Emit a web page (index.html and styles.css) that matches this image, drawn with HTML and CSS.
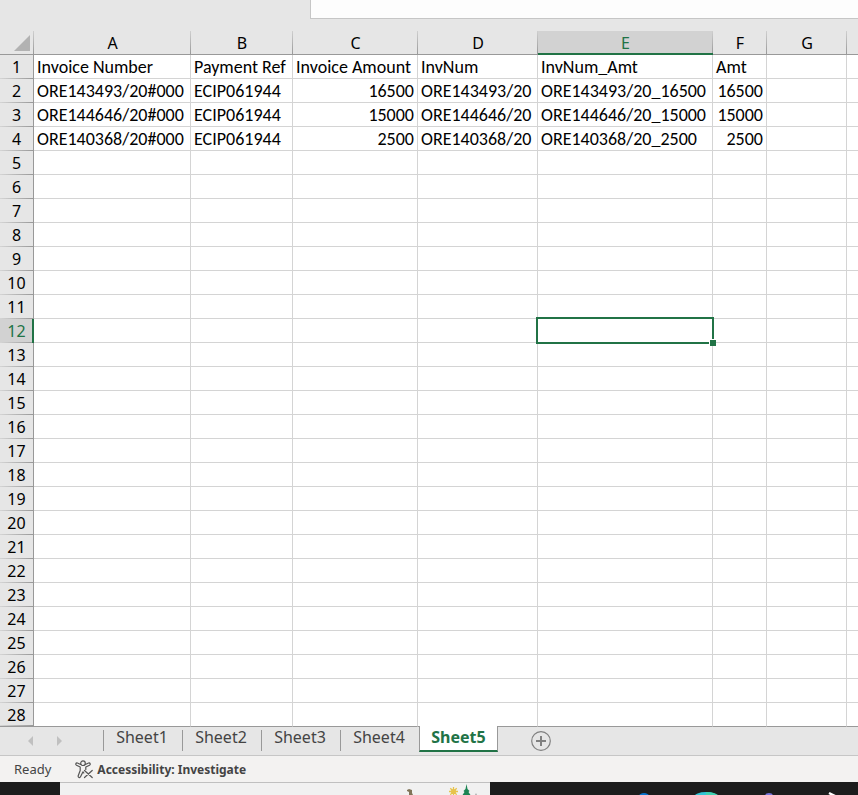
FILE: index.html
```html
<!DOCTYPE html>
<html lang="en">
<head>
<meta charset="utf-8">
<title>Workbook</title>
<link rel="stylesheet" href="styles.css">
</head>
<body>
<header class="formula-area"><div class="formula-bar"></div></header>
<main>
<table class="grid">
<colgroup><col class="c-row"><col class="c-a"><col class="c-b"><col class="c-c"><col class="c-d"><col class="c-e"><col class="c-f"><col class="c-g"><col></colgroup>
<thead>
<tr><th class="corner"><svg width="16" height="16" viewBox="0 0 16 16" aria-hidden="true"><path d="M16 0V16H0Z" fill="#b2b2b2"/></svg></th><th>A</th><th>B</th><th>C</th><th>D</th><th class="current">E</th><th>F</th><th>G</th><th></th></tr>
</thead>
<tbody>
<tr><th>1</th><td>Invoice Number</td><td>Payment Ref</td><td>Invoice Amount</td><td>InvNum</td><td>InvNum_Amt</td><td>Amt</td><td></td><td></td></tr>
<tr><th>2</th><td>ORE143493/20#000</td><td>ECIP061944</td><td class="num">16500</td><td>ORE143493/20</td><td>ORE143493/20_16500</td><td class="num">16500</td><td></td><td></td></tr>
<tr><th>3</th><td>ORE144646/20#000</td><td>ECIP061944</td><td class="num">15000</td><td>ORE144646/20</td><td>ORE144646/20_15000</td><td class="num">15000</td><td></td><td></td></tr>
<tr><th>4</th><td>ORE140368/20#000</td><td>ECIP061944</td><td class="num">2500</td><td>ORE140368/20</td><td>ORE140368/20_2500</td><td class="num">2500</td><td></td><td></td></tr>
<tr><th>5</th><td></td><td></td><td></td><td></td><td></td><td></td><td></td><td></td></tr>
<tr><th>6</th><td></td><td></td><td></td><td></td><td></td><td></td><td></td><td></td></tr>
<tr><th>7</th><td></td><td></td><td></td><td></td><td></td><td></td><td></td><td></td></tr>
<tr><th>8</th><td></td><td></td><td></td><td></td><td></td><td></td><td></td><td></td></tr>
<tr><th>9</th><td></td><td></td><td></td><td></td><td></td><td></td><td></td><td></td></tr>
<tr><th>10</th><td></td><td></td><td></td><td></td><td></td><td></td><td></td><td></td></tr>
<tr><th>11</th><td></td><td></td><td></td><td></td><td></td><td></td><td></td><td></td></tr>
<tr><th class="current">12</th><td></td><td></td><td></td><td></td><td class="selected"><div class="selection"></div></td><td></td><td></td><td></td></tr>
<tr><th>13</th><td></td><td></td><td></td><td></td><td></td><td></td><td></td><td></td></tr>
<tr><th>14</th><td></td><td></td><td></td><td></td><td></td><td></td><td></td><td></td></tr>
<tr><th>15</th><td></td><td></td><td></td><td></td><td></td><td></td><td></td><td></td></tr>
<tr><th>16</th><td></td><td></td><td></td><td></td><td></td><td></td><td></td><td></td></tr>
<tr><th>17</th><td></td><td></td><td></td><td></td><td></td><td></td><td></td><td></td></tr>
<tr><th>18</th><td></td><td></td><td></td><td></td><td></td><td></td><td></td><td></td></tr>
<tr><th>19</th><td></td><td></td><td></td><td></td><td></td><td></td><td></td><td></td></tr>
<tr><th>20</th><td></td><td></td><td></td><td></td><td></td><td></td><td></td><td></td></tr>
<tr><th>21</th><td></td><td></td><td></td><td></td><td></td><td></td><td></td><td></td></tr>
<tr><th>22</th><td></td><td></td><td></td><td></td><td></td><td></td><td></td><td></td></tr>
<tr><th>23</th><td></td><td></td><td></td><td></td><td></td><td></td><td></td><td></td></tr>
<tr><th>24</th><td></td><td></td><td></td><td></td><td></td><td></td><td></td><td></td></tr>
<tr><th>25</th><td></td><td></td><td></td><td></td><td></td><td></td><td></td><td></td></tr>
<tr><th>26</th><td></td><td></td><td></td><td></td><td></td><td></td><td></td><td></td></tr>
<tr><th>27</th><td></td><td></td><td></td><td></td><td></td><td></td><td></td><td></td></tr>
<tr><th>28</th><td></td><td></td><td></td><td></td><td></td><td></td><td></td><td></td></tr>
</tbody>
</table>
</main>
<nav class="tabs">
<div class="tab-nav">
<button type="button" aria-label="Previous sheet"><svg width="5" height="10" viewBox="0 0 5 10"><path d="M5 0V10L0 5Z" fill="#c0c0c0"/></svg></button>
<button type="button" aria-label="Next sheet"><svg width="5" height="10" viewBox="0 0 5 10"><path d="M0 0V10L5 5Z" fill="#c0c0c0"/></svg></button>
</div>
<button type="button" class="tab">Sheet1</button>
<button type="button" class="tab">Sheet2</button>
<button type="button" class="tab">Sheet3</button>
<button type="button" class="tab">Sheet4</button>
<button type="button" class="tab active">Sheet5</button>
<button type="button" class="add" aria-label="New sheet"><svg width="20" height="20" viewBox="0 0 20 20" fill="none" stroke="#808080"><circle cx="10" cy="10" r="9.3" stroke-width="1.2"/><path d="M5 10H15M10 5V15" stroke-width="2"/></svg></button>
</nav>
<footer>
<div class="status">
<span>Ready</span>
<button type="button" class="access"><svg width="19" height="19" viewBox="0 0 19 19" fill="none" stroke="#555" stroke-width="1.2" stroke-linecap="round" stroke-linejoin="round"><circle cx="8" cy="3.2" r="2.3"/><path d="M5.7 4.5 2.4 3C.8 2.6.2 4.5 1.5 5.2L5.2 7V10.5L3.2 15.8C2.8 17.5 4.8 18.2 5.5 16.8L8 11.8L8.8 13M10.3 4.5 13.6 3C15.2 2.6 15.8 4.5 14.5 5.2L10.8 7V9.5M9.5 10.5 17.2 17.5M17.2 10.5 9.5 17.5"/></svg>Accessibility: Investigate</button>
</div>
<div class="taskbar">
<div class="search"><svg width="82" height="12" viewBox="0 0 82 12" aria-hidden="true"><path d="M2 7l2-1 3 1 0 3 1 2H4V9L2 8Z" fill="#817458"/><path d="M48.500 4v9M44 8.500h9M45.300 5.300l6.400 6.400M51.700 5.300l-6.400 6.400" stroke="#e7c34b" stroke-width="1.300"/><circle cx="48.500" cy="8.500" r="2.500" fill="#e7c34b"/><path d="M61.500 1l1 5 2 2-1 1 2 3h-8l2-3-1-1 2-2Z" fill="#1c8453"/><path d="M71 10l1 2h-2Z" fill="#aaa"/></svg></div>
<svg class="apps" width="212" height="12" viewBox="0 0 212 12" aria-hidden="true"><ellipse cx="14" cy="13" rx="5" ry="3" fill="#0874ce"/><ellipse cx="76" cy="14" rx="12" ry="5" fill="#31c5d5"/><path d="M76 9q8 0 12 3H76Z" fill="#40d1b0"/><ellipse cx="139" cy="13" rx="4" ry="3" fill="#7775dc"/><path d="M199 10l8 4" stroke="#fff" stroke-width="2.4"/></svg>
</div>
</footer>
</body>
</html>
```
FILE: styles.css
```css
* { box-sizing: border-box; }
html { height: 100%; }
body {
  margin: 0;
  min-height: 100%;
  display: flex;
  flex-direction: column;
  overflow: hidden;
  background: #e6e6e6;
  color: #000;
  font-family: "Noto Sans", sans-serif;
}
button { border: 0; padding: 0; margin: 0; background: none; font: inherit; color: inherit; }
svg { display: block; }

.formula-area { padding-bottom: 12px; }
.formula-bar {
  height: 19px;
  margin-left: 310px;
  background: #fdfdfd;
  border-left: 1px solid #c6c6c6;
  border-bottom: 1px solid #c6c6c6;
}

.grid {
  width: 100%;
  table-layout: fixed;
  border-collapse: separate;
  border-spacing: 0;
  background: #fff;
}
.c-row { width: 34px; }
.c-a { width: 157px; }
.c-b { width: 102px; }
.c-c { width: 125px; }
.c-d { width: 120px; }
.c-e { width: 175px; }
.c-f { width: 54px; }
.c-g { width: 80px; }
.grid th, .grid td {
  height: 24px;
  padding: 0 3px;
  line-height: 22px;
  white-space: nowrap;
}
.grid td {
  border-right: 1px solid #d4d4d4;
  border-bottom: 1px solid #d4d4d4;
  font-family: Carlito, Lato, sans-serif;
  font-size: 18px;
  text-align: left;
}
.grid td.num { text-align: right; }
.grid th { font-size: 16px; font-weight: 400; text-align: center; }
.grid thead th {
  border-bottom: 1px solid #999;
  background: linear-gradient(#cfcfcf, #999) right / 1px 100% no-repeat #e6e6e6;
}
.grid tbody th {
  padding: 0;
  border-right: 1px solid #999;
  background: linear-gradient(90deg, #d4d4d4, #999) bottom / 100% 1px no-repeat #e6e6e6;
}
.grid thead th.current {
  border-bottom-color: #217346;
  box-shadow: inset 0 -1px #217346;
  background-color: #d2d2d2;
  color: #217346;
}
.grid tbody th.current {
  border-right-color: #217346;
  box-shadow: inset -1px 0 #217346;
  background-color: #d2d2d2;
  color: #217346;
}
.grid th:last-child, .grid td:last-child { border-right: 0; background-image: none; }
.grid tbody tr:last-child > * { border-bottom: 1px solid #999; }
.grid .corner { padding: 0 4px 0 0; }
.corner svg { margin-left: auto; }
.grid .selected { position: relative; }
.selection { position: absolute; inset: -2px; border: 2px solid #217346; z-index: 1; }
.selection::after {
  content: "";
  position: absolute;
  right: -4px;
  bottom: -4px;
  width: 6px;
  height: 6px;
  border-top: 1px solid #fff;
  border-left: 1px solid #fff;
  background: #217346;
}

.tabs {
  display: flex;
  height: 29px;
  border-bottom: 1px solid #c6c6c6;
  color: #444;
  font-size: 16px;
  line-height: 20px;
}
.tab-nav { display: flex; align-items: center; gap: 24px; width: 103px; padding-left: 28px; }
.tab {
  width: 79px;
  height: 21px;
  margin-top: 3px;
  padding: 0 2px 8px 0;
  border-left: 1px solid #999;
  line-height: 12px;
}
.tab.active {
  position: relative;
  height: 26px;
  margin-top: -1px;
  padding: 0 0 2px;
  border-right: 1px solid #999;
  border-bottom: 2px solid #217346;
  background: #fff;
  color: #217346;
  font-weight: 700;
}
.add { align-self: center; margin-left: 33px; }

footer { display: flex; flex-direction: column; flex: 1; }
.status {
  display: flex;
  align-items: center;
  gap: 24px;
  height: 26px;
  padding-left: 14px;
  background: #f3f2f1;
  color: #444;
  font-size: 13px;
}
.access { display: flex; align-items: center; gap: 3px; font-size: 12px; font-weight: 700; }
.taskbar {
  display: flex;
  flex: 1;
  justify-content: space-between;
  min-height: 13px;
  padding-left: 60px;
  background: #1c1c1c;
}
.search {
  display: flex;
  justify-content: flex-end;
  width: 430px;
  padding-right: 3px;
  border-top: 1px solid #c0c0c0;
  background: #f1f1f1;
}
.apps { align-self: flex-end; margin-right: 16px; }
```
